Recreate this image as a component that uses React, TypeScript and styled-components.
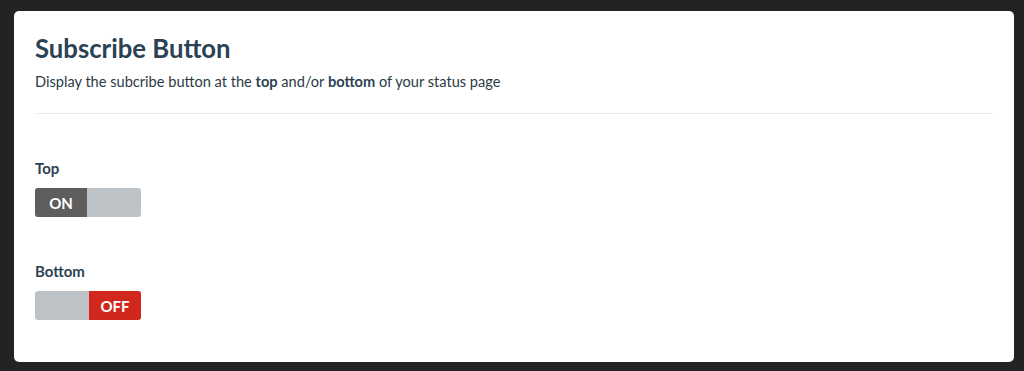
import styled, { createGlobalStyle } from 'styled-components'

const GlobalStyle = createGlobalStyle`
  html, body {
    margin: 0;
    padding: 0;
    background: #232323;
    font-family: Lato, "Open Sans", sans-serif;
  }
`

const Page = styled.div`
  padding: 11px 10px 9px 14px;
`

const Card = styled.div`
  background: #ffffff;
  border-radius: 5px;
  padding: 22px 21px 41px 21px;
  height: 351px;
  box-sizing: border-box;
`

const Title = styled.h1`
  margin: 0;
  font-size: 25.7px;
  line-height: 30px;
  font-weight: 700;
  color: #2b4255;
`

const Subtitle = styled.p`
  margin: 10px 0 0 0;
  font-size: 14.6px;
  line-height: 18px;
  color: #2b3a45;
  b {
    font-weight: 700;
    color: #2b4255;
  }
`

const Divider = styled.hr`
  border: none;
  border-top: 1px solid #ececec;
  margin: 22px 0 0 0;
`

const Field = styled.div<{ top: number }>`
  display: flex;
  flex-direction: column;
  align-items: flex-start;
  gap: 11px;
  margin-top: ${(p) => p.top}px;
`

const Label = styled.label`
  font-size: 15px;
  line-height: 18px;
  font-weight: 700;
  color: #2b4255;
`

const Switch = styled.div`
  display: flex;
  width: 106px;
  height: 29px;
  border-radius: 3px;
  overflow: hidden;
  background: #bdc3c7;
`

const Half = styled.div<{ state: 'on' | 'off' | 'blank' }>`
  width: ${(p) => (p.state === 'blank' ? 54 : 52)}px;
  display: flex;
  align-items: center;
  justify-content: center;
  font-size: 15px;
  font-weight: 700;
  color: #ffffff;
  background: ${(p) =>
    p.state === 'on' ? '#5e5e5e' : p.state === 'off' ? '#d2271d' : 'transparent'};
`

function Toggle({ on }: { on: boolean }) {
  return (
    <Switch>
      {on ? (
        <>
          <Half state="on">ON</Half>
          <Half state="blank" />
        </>
      ) : (
        <>
          <Half state="blank" />
          <Half state="off">OFF</Half>
        </>
      )}
    </Switch>
  )
}

export default function App() {
  return (
    <Page>
      <GlobalStyle />
      <Card>
        <Title>Subscribe Button</Title>
        <Subtitle>
          Display the subcribe button at the <b>top</b> and/or <b>bottom</b> of your status page
        </Subtitle>
        <Divider />
        <Field top={45}>
          <Label>Top</Label>
          <Toggle on />
        </Field>
        <Field top={45}>
          <Label>Bottom</Label>
          <Toggle on={false} />
        </Field>
      </Card>
    </Page>
  )
}
